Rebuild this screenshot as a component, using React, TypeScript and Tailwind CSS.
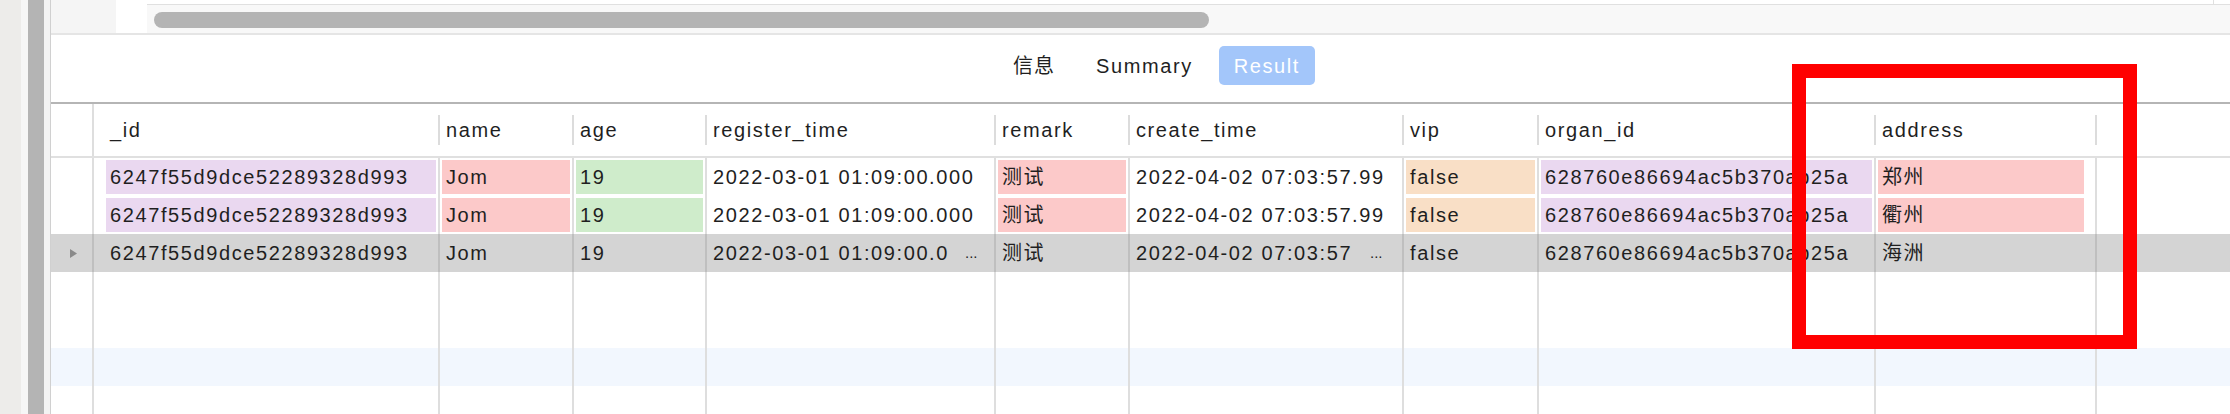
import React from 'react'

type Col = {
  name: string
  w: string
  bg: string
  inset: string
  head: string
}

const COLS: Col[] = [
  { name: '_id', w: 'w-[346px]', bg: 'bg-[#ead8f0]', inset: 'ml-[12px] mr-[2px]', head: 'pl-[16px]' },
  { name: 'name', w: 'w-[134px]', bg: 'bg-[#fcc9c9]', inset: 'ml-[2px] mr-[2px]', head: 'pl-[6px]' },
  { name: 'age', w: 'w-[133px]', bg: 'bg-[#cfeccb]', inset: 'ml-[2px] mr-[2px]', head: 'pl-[6px]' },
  { name: 'register_time', w: 'w-[289px]', bg: '', inset: 'ml-[2px] mr-[2px]', head: 'pl-[6px]' },
  { name: 'remark', w: 'w-[134px]', bg: 'bg-[#fcc9c9]', inset: 'ml-[2px] mr-[2px]', head: 'pl-[6px]' },
  { name: 'create_time', w: 'w-[274px]', bg: '', inset: 'ml-[2px] mr-[2px]', head: 'pl-[6px]' },
  { name: 'vip', w: 'w-[135px]', bg: 'bg-[#f9dfc6]', inset: 'ml-[2px] mr-[2px]', head: 'pl-[6px]' },
  { name: 'organ_id', w: 'w-[337px]', bg: 'bg-[#ead8f0]', inset: 'ml-[2px] mr-[2px]', head: 'pl-[6px]' },
  { name: 'address', w: 'w-[221px]', bg: 'bg-[#fcc9c9]', inset: 'ml-[2px] mr-[11px]', head: 'pl-[6px]' },
]

const base = ['6247f55d9dce52289328d993', 'Jom', '19', '2022-03-01 01:09:00.000', '测试', '2022-04-02 07:03:57.99', 'false', '628760e86694ac5b370ab25a']

// 选中行里被截断的时间，后面跟省略号
function Clipped({ text, width, gap }: { text: string; width: string; gap: string }) {
  return (
    <>
      <span className={`${width} shrink-0 overflow-hidden whitespace-nowrap`}>{text}</span>
      <span className={`${gap} text-[15px] tracking-[0px]`}>...</span>
    </>
  )
}

function DataRow({ cells, selected, colored, stripe }: { cells: React.ReactNode[]; selected?: boolean; colored?: boolean; stripe?: boolean }) {
  const line = selected ? 'border-[#bfbfbf]' : 'border-[#dedede]'
  const rowBg = selected ? 'bg-[#d4d4d4]' : stripe ? 'bg-[#f2f7fe]' : 'bg-white'
  return (
    <div className={`flex h-[38px] shrink-0 ${rowBg}`}>
      <div className={`w-[43px] shrink-0 border-r-2 ${line} flex items-center pl-[19px]`}>
        {selected && (
          <svg width="7" height="9" viewBox="0 0 7 9">
            <path d="M0 0 L7 4.5 L0 9 Z" fill="#8a8a8a" />
          </svg>
        )}
      </div>
      {COLS.map((c, i) => (
        <div key={c.name} className={`${c.w} shrink-0 border-r-2 ${line} flex`}>
          <div className={`${c.inset} my-[2px] flex-1 min-w-0 flex items-center pl-[4px] overflow-hidden whitespace-nowrap ${colored ? c.bg : ''}`}>
            {cells[i]}
          </div>
        </div>
      ))}
      <div className="flex-1" />
    </div>
  )
}

export default function App() {
  const row1 = [...base, '郑州']
  const row2 = [...base, '衢州']
  const row3: React.ReactNode[] = [
    base[0],
    base[1],
    base[2],
    <Clipped key="r" text="2022-03-01 01:09:00.0" width="w-[244px]" gap="ml-[8px]" />,
    base[4],
    <Clipped key="c" text="2022-04-02 07:03:57" width="w-[224px]" gap="ml-[10px]" />,
    base[6],
    base[7],
    '海洲',
  ]
  const empty = COLS.map(() => '')

  return (
    <div className="relative flex w-[2230px] h-[414px] overflow-hidden bg-white text-[20px] tracking-[1.6px] text-[#1f1f1f] font-['Liberation_Sans','Noto_Sans_CJK_SC',sans-serif]">
      {/* 左侧边栏 */}
      <div className="w-[21px] shrink-0 bg-[#edecea]" />
      <div className="w-[7px] shrink-0 bg-[#f6f6f6]" />
      <div className="w-[16px] shrink-0 bg-[#b4b4b4]" />
      <div className="w-[6px] shrink-0 bg-[#f3f3f3]" />

      <div className="flex-1 min-w-0 flex flex-col border-l border-[#d0d0d0]">
        {/* 编辑器底部 + 横向滚动条 */}
        <div className="flex h-[33px] shrink-0">
          <div className="w-[65px] shrink-0 bg-[#f5f5f5]" />
          <div className="w-[31px] shrink-0 bg-white" />
          <div className="flex-1 flex flex-col">
            <div className="h-[4px] bg-white mr-[16px] border-r border-[#e0e0e0]" />
            <div className="h-[1px] bg-[#e0e0e0]" />
            <div className="flex-1 bg-[#f8f8f8] pt-[7px] pl-[7px]">
              <div className="w-[1055px] h-[16px] rounded-full bg-[#b4b4b4]" />
            </div>
          </div>
        </div>
        <div className="h-[2px] shrink-0 bg-[#e5e5e5]" />

        {/* 标签 */}
        <div className="h-[67px] shrink-0 flex items-center justify-center gap-[11px] pl-[32px] pb-[6px]">
          <button className="px-[15px] tracking-[1px]">信息</button>
          <button className="px-[15px]">Summary</button>
          <button className="w-[96px] h-[39px] rounded-[5px] bg-[#a3c6fa] text-white">Result</button>
        </div>
        <div className="h-[2px] shrink-0 bg-[#b5b5b5]" />

        {/* 结果表格 */}
        <div className="flex h-[54px] shrink-0 border-b-2 border-[#e0e0e0]">
          <div className="w-[43px] shrink-0 border-r-2 border-[#dedede]" />
          {COLS.map((c) => (
            <div key={c.name} className={`${c.w} shrink-0 flex items-center`}>
              <div className={`flex-1 ${c.head}`}>{c.name}</div>
              <div className="w-[2px] h-[30px] bg-[#dcdcdc]" />
            </div>
          ))}
          <div className="flex-1" />
        </div>
        <DataRow cells={row1} colored />
        <DataRow cells={row2} colored />
        <DataRow cells={row3} selected />
        <DataRow cells={empty} />
        <DataRow cells={empty} />
        <DataRow cells={empty} stripe />
        <DataRow cells={empty} />
      </div>

      {/* 红框标注 */}
      <div className="absolute left-[1792px] top-[64px] w-[345px] h-[285px] border-[14px] border-[#ff0000]" />
    </div>
  )
}
